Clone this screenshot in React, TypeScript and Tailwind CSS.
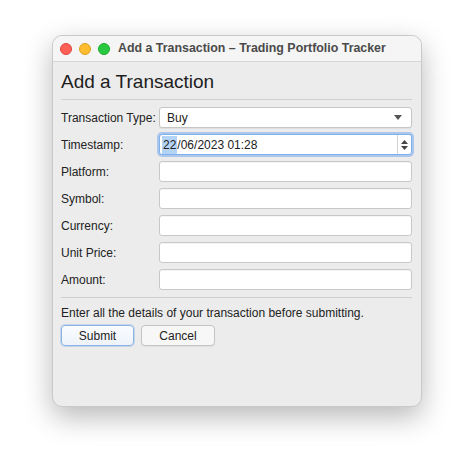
import React from "react";

const rows = ["Platform:", "Symbol:", "Currency:", "Unit Price:", "Amount:"];

function Field() {
  return <div className="h-[21px] rounded-[3px] border border-[#c8c8c8] bg-white shadow-[inset_0_1px_0_rgba(0,0,0,0.04)]" />;
}

export default function App() {
  return (
    <div
      className="flex h-[476px] w-[474px] justify-center bg-white pt-[35px]"
      style={{ fontFamily: '"Liberation Sans", Arial, sans-serif' }}
    >
      <div className="flex h-[372px] w-[370px] flex-col overflow-hidden rounded-[10px] border border-[#c9c9c9] bg-[#ececec] shadow-[0_10px_28px_rgba(0,0,0,0.28)]">
        {/* title bar */}
        <div className="flex h-[26px] shrink-0 items-center border-b border-[#d6d6d6] bg-[#f5f5f5] px-[7px]">
          <div className="flex gap-[7px]">
            <span className="h-[12px] w-[12px] rounded-full bg-[#fe5f57] border border-[#e0443e]" />
            <span className="h-[12px] w-[12px] rounded-full bg-[#febc2e] border border-[#dea123]" />
            <span className="h-[12px] w-[12px] rounded-full bg-[#28c840] border border-[#1aab29]" />
          </div>
          <div className="ml-[8px] whitespace-nowrap text-[12.4px] font-bold text-[#4a4a4a]">
            Add a Transaction – Trading Portfolio Tracker
          </div>
        </div>

        <div className="flex flex-col pl-[8px] pr-[9px]">
          <div className="pt-[6px] text-[19px] leading-[28px] text-[#1e1e1e]">Add a Transaction</div>
          <div className="mt-[3px] h-px bg-[#cfcfcf]" />

          <div className="mt-[7px] grid grid-cols-[98px_1fr] gap-y-[6px] whitespace-nowrap text-[12px] text-[#222]">
            <div className="flex items-center">Transaction Type:</div>
            <div className="flex h-[21px] items-center justify-between rounded-[3px] border border-[#c6c6c6] bg-white pl-[7px] pr-[9px] shadow-[0_1px_1px_rgba(0,0,0,0.06)]">
              <span>Buy</span>
              <svg width="8" height="5" viewBox="0 0 8 5">
                <path d="M0 0h8L4 5z" fill="#555" />
              </svg>
            </div>

            <div className="flex items-center">Timestamp:</div>
            <div className="flex h-[21px] items-stretch rounded-[3px] border border-[#7fb1ea] bg-white shadow-[0_0_0_2px_rgba(120,170,235,0.55)]">
              <div className="flex flex-1 items-center pl-[2px]">
                <span className="bg-[#b3d3f7] px-[1px]">22</span>
                <span>/06/2023 01:28</span>
              </div>
              <div className="flex w-[14px] flex-col items-center justify-center gap-[2px] border-l border-[#d4d4d4]">
                <svg width="7" height="4" viewBox="0 0 7 4">
                  <path d="M0 4h7L3.5 0z" fill="#444" />
                </svg>
                <svg width="7" height="4" viewBox="0 0 7 4">
                  <path d="M0 0h7L3.5 4z" fill="#444" />
                </svg>
              </div>
            </div>

            {rows.map((r) => (
              <React.Fragment key={r}>
                <div className="flex items-center">{r}</div>
                <Field />
              </React.Fragment>
            ))}
          </div>

          <div className="mt-[7px] h-px bg-[#cfcfcf]" />
          <div className="mt-[6px] text-[12px] text-[#222]">
            Enter all the details of your transaction before submitting.
          </div>
          <div className="mt-[3px] flex gap-[7px] text-[12px] text-[#222]">
            <button className="h-[21px] w-[73px] rounded-[4px] border border-[#8ab4e6] bg-gradient-to-b from-[#fafcff] to-[#eef3f9] shadow-[0_0_0_1px_rgba(140,180,230,0.4)]">
              Submit
            </button>
            <button className="h-[21px] w-[74px] rounded-[4px] border border-[#c4c4c4] bg-[#f7f7f7] shadow-[0_1px_1px_rgba(0,0,0,0.05)]">
              Cancel
            </button>
          </div>
        </div>
      </div>
    </div>
  );
}
